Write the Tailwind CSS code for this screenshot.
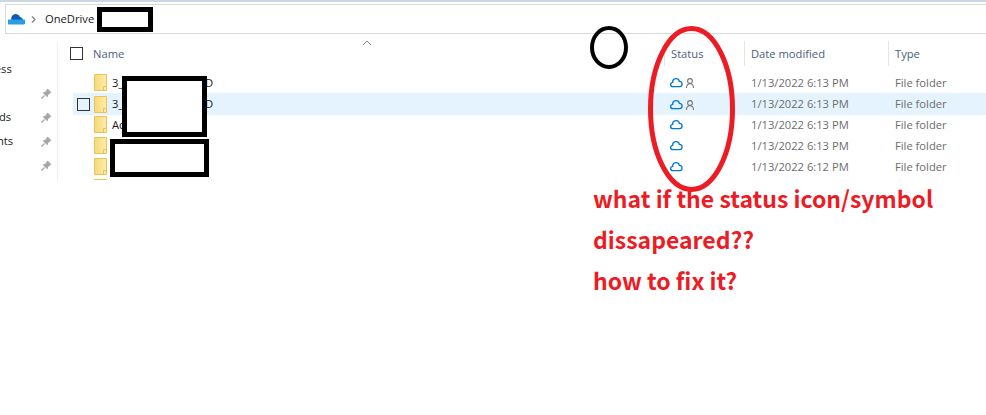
<!DOCTYPE html>
<html lang="en">

<head>
    <meta charset="UTF-8">
    <title>OneDrive</title>
    <script src="https://cdn.jsdelivr.net/npm/@tailwindcss/browser@4"></script>
</head>

<body class="relative w-[986px] h-[415px] overflow-hidden bg-white font-['Open_Sans',sans-serif] text-[11.2px] text-[#1a1a1a]">
    <div class="h-[4px] border-t-[2px] border-[#cdd6e4]"></div>

    <!-- address bar -->
    <div class="ml-[5px] h-[30px] flex items-center border border-r-0 border-[#d9d9d9]">
        <svg class="ml-[2px] w-[17px] h-[12px]" viewBox="0 0 17 12">
            <path d="M3.500 7a4.500 4.500 0 0 1 8.500-3a3.500 3.500 0 0 1 3 3z" fill="#0a5fb0" />
            <path d="M1 11.500a2.500 2.500 0 0 1 0-5h15.500a2.600 2.600 0 0 1-1 5z" fill="#2a9be8" />
        </svg>
        <svg class="ml-[6px] w-[5px] h-[7px]" viewBox="0 0 5 7">
            <path d="M1 0.500l3 3-3 3" fill="none" stroke="#8a8a8a" stroke-width="1.500" />
        </svg>
        <span class="ml-[9px]">OneDrive</span>
    </div>

    <div class="flex h-[139px] mt-[7px]">
        <!-- nav pane, cut off on the left -->
        <div class="w-[58px] shrink-0 border-r border-[#eeeeee] overflow-hidden">
            <div class="h-[21px] mt-[18px] flex items-center -ml-[23px]"><span>Access</span></div>
            <div id="nav" class="flex flex-col mt-[1px]"></div>
        </div>

        <!-- file list -->
        <div class="flex-1 flex flex-col overflow-hidden">
            <div class="relative h-[25px] mb-[6px] flex items-center text-[#4c607a] shrink-0">
                <div class="ml-[12px] w-[13px] h-[13px] border border-[#333333] shrink-0"></div>
                <div class="ml-[10px] pt-[1px] w-[571px] shrink-0">Name</div>
                <div class="w-[80px] h-[25px] pt-[1px] shrink-0 flex items-center border-l border-[#e5e5e5] pl-[6px]">Status</div>
                <div class="w-[144px] h-[25px] pt-[1px] shrink-0 flex items-center border-l border-[#e5e5e5] pl-[6px]">Date modified</div>
                <div class="h-[25px] pt-[1px] flex items-center border-l border-[#e5e5e5] pl-[6px]">Type</div>
                <svg class="absolute left-[304px] top-[-1px] w-[10px] h-[6px]" viewBox="0 0 10 6">
                    <path d="M1 5l4-4 4 4" fill="none" stroke="#8a8a8a" stroke-width="1" />
                </svg>
            </div>
            <div id="rows" class="flex flex-col ml-[15px]"></div>
        </div>
    </div>

    <!-- annotations drawn over the screenshot -->
    <div class="absolute left-[97px] top-[7px] w-[56px] h-[25px] border-[5px] border-black bg-white"></div>
    <div class="absolute left-[122px] top-[76px] w-[85px] h-[61px] border-[5px] border-black bg-white"></div>
    <div class="absolute left-[110px] top-[139px] w-[99px] h-[38px] border-[5px] border-black bg-white"></div>
    <svg class="absolute left-[590px] top-[26px] w-[38px] h-[43px]" viewBox="0 0 38 43">
        <ellipse cx="19" cy="21.500" rx="17" ry="19.500" fill="none" stroke="#000000" stroke-width="4" />
    </svg>
    <svg class="absolute left-[648px] top-[26px] w-[87px] h-[166px]" viewBox="0 0 87 166">
        <ellipse cx="43.500" cy="83" rx="41" ry="80.500" fill="none" stroke="#ed1c24" stroke-width="5" />
    </svg>
    <div class="absolute left-[593px] top-[178px] flex flex-col font-['Noto_Sans_CJK_JP',sans-serif] font-bold text-[23px] leading-[41px] text-[#ed1c24]">
        <span>what if the status icon/symbol</span>
        <span>dissapeared??</span>
        <span>how to fix it?</span>
    </div>

    <script>
        const pin = `<svg class="w-[11px] h-[11px]" viewBox="0 0 11 11"><path d="M6.500 0.500l4 4-1 0.500-2.500 2-0.500 2.500-5-5 2.500-0.500 2-2.500z" fill="#a3a8ad" /><path d="M3.500 7.500l-3 3" stroke="#a3a8ad" stroke-width="1.200" /></svg>`;
        const navRows = [
            { label: '', shift: '' },
            { label: 'ds', shift: '-ml-[1px]' },
            { label: 'nts', shift: '-ml-[3px]' },
            { label: '', shift: '' }
        ];
        document.getElementById('nav').innerHTML = navRows.map(row => `
            <div class="h-[24px] flex items-center justify-between pr-[5px]">
                <span class="${row.shift}">${row.label}</span>${pin}
            </div>`).join('');

        const cloud = `<svg class="w-[13px] h-[11px] shrink-0" viewBox="0 0 13 11"><path d="M3 9.700a2.200 2.200 0 0 1-0.300-4.400a3.400 3.400 0 0 1 6.700-1a2.600 2.700 0 0 1 0.100 5.400z" fill="none" stroke="#0078d7" stroke-width="1.300" /></svg>`;
        const person = `<svg class="w-[8px] h-[10px] mt-[1px] shrink-0" viewBox="0 0 8 10"><circle cx="4" cy="3" r="2.400" fill="none" stroke="#777777" stroke-width="1.100" /><path d="M0.500 10c0-2.800 1.500-4.300 3.500-4.300s3.500 1.500 3.500 4.300" fill="none" stroke="#777777" stroke-width="1.100" /></svg>`;
        const folder = `<svg class="ml-[4px] w-[13px] h-[17px] shrink-0" viewBox="0 0 13 17"><defs><linearGradient id="folderFill" x1="0" x2="1" y1="0" y2="0"><stop offset="0" stop-color="#f7d879" /><stop offset="1" stop-color="#fdecaa" /></linearGradient></defs><path d="M0.500 0.500h12v16h-12z" fill="url(#folderFill)" stroke="#eac355" /><path d="M9.500 16.500v-4h3" fill="none" stroke="#eac355" /></svg>`;
        const files = [
            { name: '3_', end: 'D', shared: true, date: '1/13/2022 6:13 PM' },
            { name: '3_', end: 'D', shared: true, date: '1/13/2022 6:13 PM', hover: true },
            { name: 'Ac', end: '', date: '1/13/2022 6:13 PM' },
            { name: '', end: '', date: '1/13/2022 6:13 PM' },
            { name: '', end: '', date: '1/13/2022 6:12 PM' },
            { name: '', end: '', date: '' }
        ];

        // Rows of the file list
        document.getElementById('rows').innerHTML = files.map(file => `
            <div class="${file.hover ? 'h-[22px] -mb-[1px] bg-[#e5f3ff]' : 'h-[21px]'} flex items-center shrink-0">
                <div class="ml-[4px] w-[13px] h-[13px] shrink-0 ${file.hover ? 'border border-[#333333]' : ''}"></div>
                ${folder}
                <span class="ml-[5px] pt-[1px] w-[93px] shrink-0">${file.name}</span>
                <span class="pt-[1px] w-[465px] shrink-0">${file.end}</span>
                <div class="w-[81px] shrink-0 flex items-center gap-[3px]">${file.date ? cloud : ''}${file.shared ? person : ''}</div>
                <span class="pt-[1px] w-[144px] shrink-0 text-[#6d6d6d]">${file.date}</span>
                <span class="pt-[1px] text-[#6d6d6d]">${file.date ? 'File folder' : ''}</span>
            </div>`).join('');
    </script>
</body>

</html>
